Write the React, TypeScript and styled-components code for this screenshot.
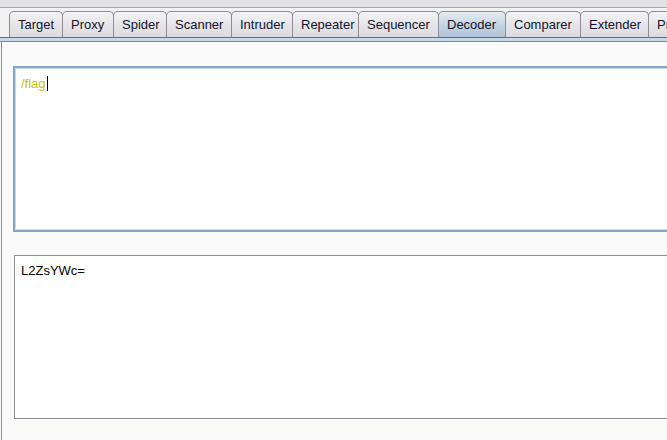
import React from 'react';
import styled, { createGlobalStyle } from 'styled-components';

const GlobalStyle = createGlobalStyle`
  html, body {
    margin: 0;
    padding: 0;
    background: #fafafa;
    overflow: hidden;
  }
  body {
    font-family: "Liberation Sans", Arial, sans-serif;
  }
`;

// tab label and its width in px (borders overlap by 1px)
const tabs: [string, number][] = [
  ['Target', 54],
  ['Proxy', 52],
  ['Spider', 54],
  ['Scanner', 66],
  ['Intruder', 62],
  ['Repeater', 67],
  ['Sequencer', 81],
  ['Decoder', 68],
  ['Comparer', 76],
  ['Extender', 69],
  ['Project options', 110],
];

const Page = styled.div`
  width: 667px;
  height: 440px;
  overflow: hidden;
  display: flex;
  flex-direction: column;
  background: #fafafa;
`;

const TopStrip = styled.div`
  height: 7px;
  background: #e2e2e4;
  border-bottom: 1px solid #a4a6ab;
  flex-shrink: 0;
`;

const TabStrip = styled.div`
  display: flex;
  align-items: flex-end;
  height: 29px;
  padding-left: 9px;
  background: #f2f2f3;
  flex-shrink: 0;
  white-space: nowrap;
`;

const Tab = styled.div<{ selected?: boolean; $width: number }>`
  box-sizing: border-box;
  width: ${(p) => p.$width}px;
  height: 26px;
  line-height: 25px;
  margin-left: -1px;
  padding-left: 8px;
  font-size: 13px;
  color: #14142e;
  border: 1px solid #8b8d93;
  border-bottom: none;
  border-radius: 5px 5px 0 0;
  flex-shrink: 0;
  overflow: hidden;
  background: ${(p) =>
    p.selected
      ? 'linear-gradient(#e6ecf2, #c3d3e1 55%, #afc3d6)'
      : 'linear-gradient(#f4f4f6, #e6e6e9 50%, #dcdce0)'};

  &:first-child {
    margin-left: 0;
  }
`;

const TabRule = styled.div`
  height: 3px;
  background: #c6d8ea;
  border-top: 1px solid #5d6e80;
  border-bottom: 1px solid #7a8a9c;
  flex-shrink: 0;
`;

const Panel = styled.div`
  flex: 1;
  display: flex;
  flex-direction: column;
  gap: 23px;
  margin-left: 1px;
  padding: 24px 0 0 11px;
  border-left: 1px solid #8e9097;
  background: #fafafa;
`;

const InputEditor = styled.div`
  width: 700px;
  height: 148px;
  padding: 8px 6px 6px;
  background: #ffffff;
  border: 2px solid #88a4c0;
  box-shadow: inset 0 0 0 1px #c9dbee;
  font-size: 13px;
  line-height: 16px;
  color: #c4c400;
`;

const OutputEditor = styled.div`
  width: 700px;
  height: 150px;
  margin-left: 1px;
  padding: 7px 6px 5px;
  background: #ffffff;
  border: 1px solid #8e9097;
  font-size: 13px;
  line-height: 16px;
  color: #000000;
`;

const Caret = styled.span`
  display: inline-block;
  width: 1px;
  height: 15px;
  margin-left: 1px;
  vertical-align: -3px;
  background: #000000;
`;

export default function App() {
  return (
    <>
      <GlobalStyle />
      <Page>
        <TopStrip />
        <TabStrip>
          {tabs.map(([label, width]) => (
            <Tab key={label} $width={width} selected={label === 'Decoder'}>
              {label}
            </Tab>
          ))}
        </TabStrip>
        <TabRule />
        <Panel>
          <InputEditor>
            /flag
            <Caret />
          </InputEditor>
          <OutputEditor>L2ZsYWc=</OutputEditor>
        </Panel>
      </Page>
    </>
  );
}
